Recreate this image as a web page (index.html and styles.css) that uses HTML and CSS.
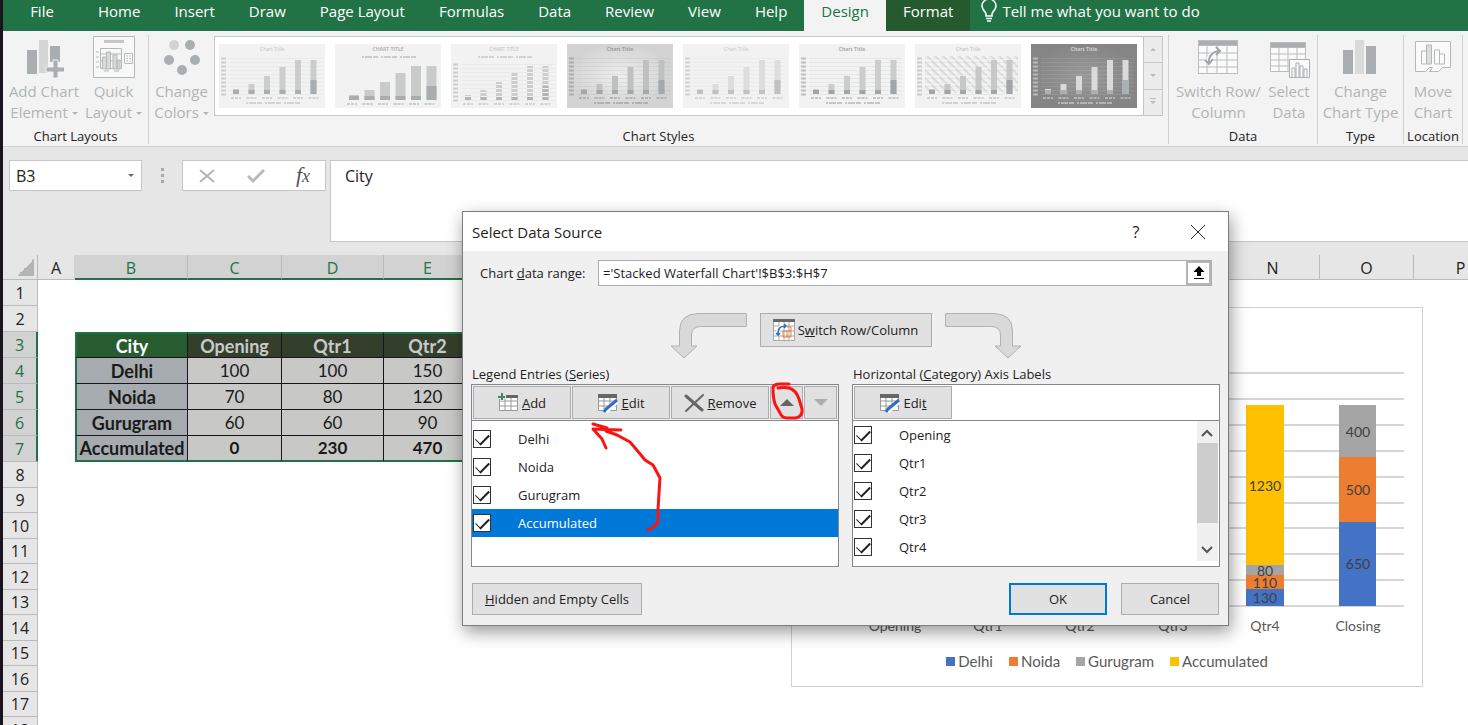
FILE: index.html
```html
<!DOCTYPE html>
<html lang="en">
<head>
  <meta charset="UTF-8">
  <meta name="viewport" content="width=device-width, initial-scale=1.0">
  <title>Stacked Waterfall Chart</title>
  <link rel="stylesheet" href="styles.css">
</head>
<body>
  <nav class="tabs">
    <button class="tab tab-file">File</button>
    <button class="tab">Home</button>
    <button class="tab">Insert</button>
    <button class="tab">Draw</button>
    <button class="tab">Page Layout</button>
    <button class="tab">Formulas</button>
    <button class="tab">Data</button>
    <button class="tab">Review</button>
    <button class="tab">View</button>
    <button class="tab">Help</button>
    <button class="tab tab-active">Design</button>
    <button class="tab tab-context">Format</button>
    <button class="tell-me">
      <svg width="18" height="24" viewBox="0 0 18 24" fill="none" stroke="#fff" stroke-width="1.6"><path d="M6 17v-2c0-2-4-4-4-8a7 7 0 0 1 14 0c0 4-4 6-4 8v2zM6 19.500h6M7 22h4"/></svg>
      Tell me what you want to do
    </button>
  </nav>

  <div class="ribbon">
    <section class="group group-layouts">
      <div class="group-items">
        <button class="tool" disabled>
          <svg width="40" height="42" viewBox="0 0 40 42"><path fill="#a9afb1" d="M3 14h10v24H3zM26 10h10v16H26z"/><path fill="#d5d6d6" d="M15 4h9v33h-9z"/><path fill="#a9afb1" stroke="#f3f3f3" d="M29 24h5v7h7v5h-7v6h-5v-6h-7v-5h7z"/></svg>
          <span>Add Chart<br>Element <i class="caret"></i></span>
        </button>
        <button class="tool" disabled>
          <svg width="44" height="42" viewBox="0 0 44 42" fill="none" stroke="#b4b8b9"><path fill="#f8f8f8" d="M1.500.5h41v41h-41z"/><path stroke-width="3" stroke="#c4c6c7" d="M12 5.500h20"/><path d="M8.500 12.500h21v20h-21zM8.500 18h21M8.500 25h21M4 16h3M4 21h3M4 26h3M4 31h3M12 35h5M22 35h5"/><path fill="#d8dada" d="M10.500 21h4v12h-4zM14.500 16h4v17h-4zM21 19h4v14h-4zM25 24h3v9h-3z"/><path fill="#fff" d="M32.500 17.500h8v10h-8z"/><path d="M34 20h2M37 20h2M34 22.500h2M37 22.500h2M34 25h2M37 25h2"/></svg>
          <span>Quick<br>Layout <i class="caret"></i></span>
        </button>
      </div>
      <div class="group-name">Chart Layouts</div>
    </section>

    <section class="group group-styles">
      <div class="group-items">
        <button class="tool tool-colors" disabled>
          <svg width="40" height="42" viewBox="0 0 40 42" fill="#a9afb1"><circle cx="12" cy="9" r="5" fill="#d2d3d3"/><circle cx="28" cy="9" r="5"/><circle cx="7" cy="24" r="5"/><circle cx="33" cy="24" r="5"/><circle cx="20" cy="34" r="5"/></svg>
          <span>Change<br>Colors <i class="caret"></i></span>
        </button>
        <div class="gallery">
          <div class="thumbs" id="thumbs"></div>
          <div class="gallery-scroll">
            <button disabled aria-label="Previous row"><i class="caret caret-up"></i></button>
            <button disabled aria-label="Next row"><i class="caret"></i></button>
            <button disabled aria-label="More styles"><i class="caret caret-more"></i></button>
          </div>
        </div>
      </div>
      <div class="group-name">Chart Styles</div>
    </section>

    <section class="group group-data">
      <div class="group-items">
        <button class="tool" disabled>
          <svg width="42" height="42" viewBox="0 0 42 42" fill="none" stroke="#b9bcbd"><path fill="#fafafa" d="M1.500 4.500h39v33h-39z"/><path fill="#a9afb1" d="M1.500 4.500h39v5h-39z"/><path d="M1 17h39M1 24h39M1 31h39M10 10v27M20 10v27M30 10v27"/><path stroke="#f8f8f8" stroke-width="5" d="M12 28c-1-7 4-13 11-12"/><path stroke="#9fa6a8" stroke-width="2" d="M12 28c-1-8 4-13 11-13M8 24l4 4 4-5M19 11l4 4-4 4"/></svg>
          <span>Switch Row/<br>Column</span>
        </button>
        <button class="tool" disabled>
          <svg width="42" height="42" viewBox="0 0 42 42" fill="none" stroke="#b9bcbd"><path fill="#fafafa" d="M2.500 6.500h35v29h-35z"/><path fill="#a9afb1" d="M2.500 6.500h35v5h-35z"/><path d="M2 18h35M2 24h35M2 30h35M11 12v24M20 12v24M29 12v24"/><path fill="#fafafa" stroke="#a9afb1" d="M21.500 23.500h20v18h-20zM24 41v-9h3v9M28 41V27h3v14M32 41V30h3v11M36 41v-8h3v8"/></svg>
          <span>Select<br>Data</span>
        </button>
      </div>
      <div class="group-name">Data</div>
    </section>

    <section class="group group-type">
      <div class="group-items">
        <button class="tool" disabled>
          <svg width="42" height="42" viewBox="0 0 42 42"><path fill="#a9afb1" d="M4 14h10v24H4zM27 10h10v28H27z"/><path fill="#d9dada" d="M16 4h9v34h-9z"/></svg>
          <span>Change<br>Chart Type</span>
        </button>
      </div>
      <div class="group-name">Type</div>
    </section>

    <section class="group group-location">
      <div class="group-items">
        <button class="tool" disabled>
          <svg width="42" height="42" viewBox="0 0 42 42" fill="none" stroke="#b4b8b9"><path fill="#fafafa" d="M3.500 5.500h35v26h-8l-4 4h-9l3-4h-3l-4 4h-10z"/><path d="M9.500 15h5v13h-5zM22.500 14h5v14h-5zM27.500 18h5v10h-5z"/><path fill="#dcdddd" d="M14.500 9h5v19h-5z"/></svg>
          <span>Move<br>Chart</span>
        </button>
      </div>
      <div class="group-name">Location</div>
    </section>
  </div>

  <div class="formula-bar">
    <div class="name-box">
      <input type="text" value="B3" aria-label="Name box">
      <button aria-label="Defined names"><i class="caret"></i></button>
    </div>
    <div class="dots"><i></i><i></i><i></i></div>
    <div class="entry-buttons">
      <button aria-label="Cancel entry"><svg width="18" height="18" viewBox="0 0 18 18" fill="none" stroke="#b5b5b5" stroke-width="2"><path d="M2 3l14 12M16 3L2 15"/></svg></button>
      <button aria-label="Enter"><svg width="18" height="18" viewBox="0 0 18 18" fill="none" stroke="#b9b9b9" stroke-width="3"><path d="M1 9l5 5L17 3"/></svg></button>
      <button class="fx" aria-label="Insert function"><span>f</span>x</button>
    </div>
    <textarea class="formula" aria-label="Formula">City</textarea>
  </div>

  <main class="sheet">
    <table class="grid" id="grid"></table>

    <div class="chart">
      <svg width="631" height="379" viewBox="0 0 631 379">
        <path class="gridlines" d="M57 65h555M57 91h555M57 117h555M57 143h555M57 169h555M57 195h555M57 220h555M57 246h555M57 272h555M57 298h555"/>
        <g class="bar">
          <path fill="#ffc000" d="M454 97h38v160h-38z"/>
          <path fill="#a5a5a5" d="M454 257h38v10h-38z"/>
          <path fill="#ed7d31" d="M454 267h38v14h-38z"/>
          <path fill="#4472c4" d="M454 281h38v17h-38z"/>
          <text x="473" y="183">1230</text>
          <text x="473" y="268">80</text>
          <text x="473" y="280">110</text>
          <text x="473" y="295">130</text>
        </g>
        <g class="bar">
          <path fill="#a5a5a5" d="M547 97h37v52h-37z"/>
          <path fill="#ed7d31" d="M547 149h37v65h-37z"/>
          <path fill="#4472c4" d="M547 214h37v84h-37z"/>
          <text x="566" y="129">400</text>
          <text x="566" y="187">500</text>
          <text x="566" y="261">650</text>
        </g>
        <g class="axis">
          <text x="103" y="323">Opening</text>
          <text x="196" y="323">Qtr1</text>
          <text x="288" y="323">Qtr2</text>
          <text x="381" y="323">Qtr3</text>
          <text x="473" y="323">Qtr4</text>
          <text x="566" y="323">Closing</text>
        </g>
      </svg>
      <ul class="legend">
        <li class="delhi">Delhi</li>
        <li class="noida">Noida</li>
        <li class="gurugram">Gurugram</li>
        <li class="accumulated">Accumulated</li>
      </ul>
    </div>
  </main>

  <div class="dialog" role="dialog" aria-labelledby="dialog-title">
    <div class="title-bar">
      <h1 id="dialog-title">Select Data Source</h1>
      <button class="help" aria-label="Help">?</button>
      <button class="close" aria-label="Close"><svg width="14" height="14" viewBox="0 0 14 14" stroke="#222"><path d="M0 0l14 14M14 0L0 14"/></svg></button>
    </div>
    <div class="dialog-body">
      <div class="range-row">
        <label for="range">Chart <u>d</u>ata range:</label>
        <div class="range-box">
          <input type="text" id="range" value="='Stacked Waterfall Chart'!$B$3:$H$7">
          <button aria-label="Collapse dialog"><svg width="14" height="14" viewBox="0 0 14 14"><path d="M7 0l5.500 6H9v4H5V6H1.500zM2 12h10v1H2z"/></svg></button>
        </div>
      </div>

      <div class="switch-row">
        <svg width="78" height="48" viewBox="0 0 78 48" fill="#d9d9d9" stroke="#aeb2b4"><path d="M76.500 1.500H28Q9.500 2 9.500 19v15H1l13 12 13-12h-5.500V23q0-8 9-8.500h46z"/></svg>
        <button class="btn switch-btn">
          <svg width="22" height="22" viewBox="0 0 22 22" fill="none" stroke="#aaa"><path fill="#fff" d="M.5.5h21v21H.5zM0 7h21M0 12h21M0 17h21M6 3v18M11 3v18M16 3v18"/><path fill="#666" stroke="#666" d="M.5.500h21v2H.5z"/><path stroke="#ed7d31" d="M10 12h8v6h-8zM14 8h4v4M14 12v6"/><path fill="none" stroke="#fff" stroke-width="4" d="M5 15c0-5 1-8 7-8"/><path stroke="#2b6fc4" stroke-width="1.500" d="M5 16c0-6 1-9 8-9M11 5l2 2-2 2M3 14l2 2 2-2"/></svg>
          <span>S<u>w</u>itch Row/Column</span>
        </button>
        <svg width="78" height="48" viewBox="0 0 78 48" fill="#d9d9d9" stroke="#aeb2b4"><path d="M1.500 1.500H50Q68.500 2 68.500 19v15H77L64 46 51 34h5.500V23q0-8-9-8.500h-46z"/></svg>
      </div>

      <div class="panels">
        <section class="panel-wrap">
          <h2>Legend Entries (<u>S</u>eries)</h2>
          <div class="panel">
            <div class="toolbar">
              <button class="btn"><svg width="21" height="20" viewBox="0 0 21 20"><path fill="#fff" stroke="#999" d="M1.500 3.500h18v14h-18zM1 8h18M1 13h18M7 4v14M13 4v14"/><path fill="#666" d="M8 2h12v3H8z"/><path stroke="#e1e1e1" stroke-width="4" d="M4 0v8M0 4h8"/><path stroke="#3a8a63" stroke-width="2" d="M4 0v7M0 4h7"/></svg><span><u>A</u>dd</span></button>
              <button class="btn"><svg width="21" height="20" viewBox="0 0 21 20"><path fill="#fff" stroke="#999" d="M1.500 3.500h18v14h-18zM1 8h18M1 13h18M7 4v14M13 4v14"/><path fill="#666" d="M1 1h19v4H1z"/><path stroke="#fff" stroke-width="5" d="M8 19L20 8"/><path stroke="#2b6fc4" stroke-width="3" d="M7 19l2-3L20 7"/></svg><span><u>E</u>dit</span></button>
              <button class="btn"><svg width="21" height="20" viewBox="0 0 21 20" fill="none" stroke="#666" stroke-linecap="round"><path stroke-width="3" d="M2 3l8 7M18 17l-8-7"/><path stroke-width="2" d="M19 2L2 18"/></svg><span><u>R</u>emove</span></button>
              <button class="btn arrow" aria-label="Move up"><i class="up"></i></button>
              <button class="btn arrow" aria-label="Move down" disabled><i class="down"></i></button>
            </div>
            <div class="list list-series">
              <label class="item"><input type="checkbox" checked>Delhi</label>
              <label class="item"><input type="checkbox" checked>Noida</label>
              <label class="item"><input type="checkbox" checked>Gurugram</label>
              <label class="item selected"><input type="checkbox" checked>Accumulated</label>
            </div>
          </div>
        </section>

        <section class="panel-wrap">
          <h2>Horizontal (<u>C</u>ategory) Axis Labels</h2>
          <div class="panel">
            <div class="toolbar">
              <button class="btn"><svg width="21" height="20" viewBox="0 0 21 20"><path fill="#fff" stroke="#999" d="M1.500 3.500h18v14h-18zM1 8h18M1 13h18M7 4v14M13 4v14"/><path fill="#666" d="M1 1h19v4H1z"/><path stroke="#fff" stroke-width="5" d="M8 19L20 8"/><path stroke="#2b6fc4" stroke-width="3" d="M7 19l2-3L20 7"/></svg><span>Edi<u>t</u></span></button>
            </div>
            <div class="list-row">
              <div class="list">
                <label class="item"><input type="checkbox" checked>Opening</label>
                <label class="item"><input type="checkbox" checked>Qtr1</label>
                <label class="item"><input type="checkbox" checked>Qtr2</label>
                <label class="item"><input type="checkbox" checked>Qtr3</label>
                <label class="item"><input type="checkbox" checked>Qtr4</label>
              </div>
              <div class="scrollbar">
                <svg width="20" height="22" viewBox="0 0 20 22" fill="none" stroke="#555" stroke-width="2"><path d="M5 15l5-5 5 5"/></svg>
                <div class="thumb"></div>
                <svg width="20" height="22" viewBox="0 0 20 22" fill="none" stroke="#555" stroke-width="2"><path d="M5 8l5 5 5-5"/></svg>
              </div>
            </div>
          </div>
        </section>
      </div>

      <div class="actions">
        <button class="btn btn-hidden"><span><u>H</u>idden and Empty Cells</span></button>
        <button class="btn btn-ok">OK</button>
        <button class="btn">Cancel</button>
      </div>
    </div>

    <svg class="ink" viewBox="0 0 765 413" width="765" height="413">
      <path d="M326 172h-9q-7 0-7 4 0 10 2 16l5 9q2 5 7 5h9q7-2 6-9l-3-10q-3-9-10-11-5-1-11 0"/>
      <path d="M185 318q7-3 10-8v-13l2-31-7-13-8-5-4-5-11-13-13-7-11-4 1-3-14-4M158 218l-28-1 9 10 4 9"/>
    </svg>
  </div>

  <script>
    const columns = [
      ['A', 37], ['B', 113], ['C', 94], ['D', 102], ['E', 88], ['F', 96], ['G', 94], ['H', 94],
      ['I', 94], ['J', 94], ['K', 94], ['L', 94], ['M', 94], ['N', 94], ['O', 94], ['P', 94]
    ];
    // cell values of the source table, by row number, from column B on
    const data = {
      3: ['City', 'Opening', 'Qtr1', 'Qtr2', 'Qtr3', 'Qtr4', 'Closing'],
      4: ['Delhi', 100, 100, 150, '', '', ''],
      5: ['Noida', 70, 80, 120, '', '', ''],
      6: ['Gurugram', 60, 60, 90, '', '', ''],
      7: ['Accumulated', 0, 230, 470, '', '', '']
    };

    function renderGrid() {
      let html = '<colgroup><col style="width:35px">';
      columns.forEach(c => html += `<col style="width:${c[1]}px">`);
      html += '</colgroup><thead><tr><th class="corner"></th>';
      columns.forEach((c, i) => {
        html += `<th class="${i >= 1 && i <= 7 ? 'picked' : ''}">${c[0]}</th>`;
      });
      html += '</tr></thead><tbody>';
      for (let row = 1; row <= 18; row++) {
        const values = data[row];
        html += `<tr class="${values ? 'data-row row-' + row : ''}"><th class="${values ? 'picked' : ''}">${row}</th>`;
        columns.forEach((c, i) => {
          const filled = values && i >= 1 && i <= 7;
          html += filled ? `<td class="cell">${values[i - 1]}</td>` : '<td></td>';
        });
        html += '</tr>';
      }
      document.getElementById('grid').innerHTML = html + '</tbody>';
    }

    const styles = [
      { bg: '#f2f2f2', bar: '#cbcccc', low: '#a8adaf', ink: '#c0c0c0', title: 'Chart Title' },
      { bg: '#f2f2f2', bar: '#c9caca', low: '#a8adaf', ink: '#b4b4b4', title: 'CHART TITLE', top: true, wide: true, bold: true },
      { bg: '#f2f2f2', bar: '#cccdcd', low: '#b0b4b5', ink: '#c0c0c0', title: 'CHART TITLE', top: true, dashed: true },
      { bg: 'url(#silver)', bar: '#bfc0c0', low: '#a3a8aa', ink: '#9b9b9b', title: 'Chart Title', bold: true },
      { bg: '#f2f2f2', bar: '#dcdddd', low: '#bfc1c2', ink: '#c6c6c6', title: 'Chart Title' },
      { bg: '#f2f2f2', bar: '#cbcccc', low: '#a0a6a8', ink: '#a9a9a9', title: 'Chart Title', bold: true },
      { bg: '#f2f2f2', bar: '#c6c7c7', low: '#a0a6a8', ink: '#bababa', title: 'Chart Title', hatch: true },
      { bg: 'url(#dark)', bar: '#dadada', low: '#a9b1b4', ink: '#d2d2d2', title: 'Chart Title', bold: true }
    ];

    function renderThumbs() {
      const heights = [5, 10, 18, 27, 34, 34];
      const defs = `<defs>
        <radialGradient id="silver"><stop offset="0" stop-color="#eee"/><stop offset="1" stop-color="#d3d3d3"/></radialGradient>
        <radialGradient id="dark"><stop offset="0" stop-color="#999"/><stop offset="1" stop-color="#858585"/></radialGradient>
        <pattern id="hatch" width="8" height="8" patternUnits="userSpaceOnUse"><path d="M-2-2l12 12" stroke="#dedede" stroke-width="2"/></pattern>
      </defs>`;
      document.getElementById('thumbs').innerHTML = styles.map((s, n) => {
        const base = s.top ? 56 : 50;
        const w = s.wide ? 10 : 6;
        let svg = `<rect width="106" height="64" fill="${s.bg}"/>`;
        if (s.hatch) svg += '<rect x="10" y="12" width="93" height="37" fill="url(#hatch)"/>';
        for (let y = base - 36; y <= base && !s.wide; y += 4) {
          svg += `<path d="M10 ${y}.500h93" stroke="${s.ink}" opacity=".15"/><path d="M2 ${y}.500h5" stroke="${s.ink}" stroke-width="2" opacity=".7"/>`;
        }
        heights.forEach((h, i) => {
          const x = 14 + i * 15.500;
          const low = i == 5 ? 14 : 4;
          svg += `<path d="M${x} ${base}v${-h}h${w}v${h}z" fill="${s.bar}"/><path d="M${x} ${base}v${-low}h${w}v${low}z" fill="${s.low}"/>`;
          if (s.dashed) svg += `<path d="M${x + 3} ${base - 3}V${base - h}" stroke="${s.bg}" stroke-width="6" stroke-dasharray="1 3"/>`;
          svg += `<path d="M${x - 2} ${base + 4}h10" stroke="${s.ink}" stroke-width="2" stroke-dasharray="3 1" opacity=".6"/>`;
        });
        svg += `<path d="M27 ${s.top ? 13 : 59}h54" stroke="${s.ink}" stroke-width="2" stroke-dasharray="2 1 7 1 5 3" opacity=".6"/>`;
        svg += `<text x="53" y="7" text-anchor="middle" font-size="5" font-weight="${s.bold ? 700 : 400}" fill="${s.ink}">${s.title}</text>`;
        return `<button disabled aria-label="Style ${n + 1}"><svg width="106" height="64" viewBox="0 0 106 64">${n ? '' : defs}${svg}</svg></button>`;
      }).join('');
    }

    renderGrid();
    renderThumbs();
  </script>
</body>
</html>
```
FILE: styles.css
```css
* {
  box-sizing: border-box;
}
body {
  margin: 0;
  height: 100vh;
  display: flex;
  flex-direction: column;
  position: relative;
  overflow: hidden;
  border-left: 3px solid #1a141d;
  background: #e6e6e6;
  color: #222;
  font-family: "Open Sans", "Noto Sans", sans-serif;
  font-size: 13px;
}
button, input, textarea {
  font: inherit;
  color: inherit;
  margin: 0;
  padding: 0;
  border: 0;
  background: none;
}
svg {
  display: block;
  flex: none;
}

/* tabs */
.tabs {
  display: flex;
  flex: none;
  height: 31px;
  background: #217346;
  color: #fff;
  font-size: 15px;
}
.tab {
  padding: 0 17px 10px;
  line-height: 20px;
  white-space: nowrap;
}
.tab-file {
  width: 78px;
}
.tab-active {
  background: #f3f3f3;
  color: #217346;
}
.tab-context {
  background: #25592e;
}
.tell-me {
  display: flex;
  align-items: center;
  gap: 4px;
  padding: 0 10px 10px;
  line-height: 20px;
  white-space: nowrap;
}

/* ribbon */
.ribbon {
  display: flex;
  flex: none;
  height: 116px;
  padding: 4px 5px 2px 0;
  background: #f3f3f3;
  border-bottom: 1px solid #d2d2d2;
}
.group {
  display: flex;
  flex-direction: column;
  justify-content: space-between;
  flex: none;
  border-right: 1px solid #d2d2d2;
}
.group-layouts {
  width: 146px;
}
.group-styles {
  flex: 1;
  min-width: 0;
}
.group-data {
  width: 149px;
}
.group-type {
  width: 86px;
}
.group-location {
  width: 59px;
}
.group-items {
  display: flex;
  justify-content: space-evenly;
}
.group-styles .group-items {
  justify-content: flex-start;
}
.group-name {
  text-align: center;
  line-height: 16px;
}
.tool {
  display: flex;
  flex-direction: column;
  align-items: center;
  gap: 3px;
  padding-top: 1px;
  color: #b1b5b6;
  font-size: 15px;
  line-height: 21px;
  white-space: nowrap;
}
.tool-colors {
  width: 65px;
}
.caret {
  display: inline-block;
  vertical-align: middle;
  border: 3px solid transparent;
  border-top-color: currentColor;
  border-bottom: 0;
}
.caret-up {
  border-top: 0;
  border-bottom: 3px solid currentColor;
}
.caret-more {
  box-shadow: 0 -2px #ececec, 0 -3px currentColor;
}
.gallery {
  display: flex;
  flex: 1;
  min-width: 0;
  height: 80px;
  margin: 1px 5px 0 0;
  border: 1px solid #c6c6c6;
  background: #fff;
}
.thumbs {
  display: flex;
  flex: 1;
  gap: 10px;
  padding: 7px 4px;
  overflow: hidden;
}
.gallery-scroll {
  display: flex;
  flex-direction: column;
  width: 19px;
  border-left: 1px solid #c6c6c6;
  background: #ececec;
  color: #bbb;
}
.gallery-scroll button {
  display: flex;
  align-items: center;
  justify-content: center;
  flex: 1;
}
.gallery-scroll button + button {
  border-top: 1px solid #c6c6c6;
}

/* formula bar */
.formula-bar {
  display: flex;
  flex: none;
  align-items: flex-start;
  padding: 13px 0 13px 6px;
  font-size: 16px;
}
.name-box {
  display: flex;
  align-items: center;
  width: 133px;
  height: 31px;
  padding: 0 7px 0 6px;
  border: 1px solid #c6c6c6;
  background: #fff;
}
.name-box input {
  flex: 1;
  min-width: 0;
}
.name-box .caret {
  display: block;
  color: #666;
}
.dots {
  display: flex;
  flex-direction: column;
  align-items: center;
  gap: 3px;
  width: 40px;
  padding-top: 8px;
}
.dots i {
  width: 3px;
  height: 3px;
  background: #a9a9a9;
}
.entry-buttons {
  display: flex;
  justify-content: space-between;
  align-items: center;
  width: 144px;
  height: 31px;
  padding: 0 15px;
  border: 1px solid #c6c6c6;
  background: #fff;
}
.fx {
  font: italic 18px/24px "Liberation Serif", serif;
  color: #555;
}
.fx span {
  font-size: 22px;
}
.formula {
  flex: 1;
  height: 82px;
  margin-left: 4px;
  padding: 3px 14px;
  border: 1px solid #c6c6c6;
  border-right: 0;
  background: #fff;
  line-height: 24px;
  resize: none;
}

/* sheet */
.sheet {
  flex: 1;
  min-height: 0;
  position: relative;
  overflow: hidden;
  background: #fff;
}
.grid {
  width: 1505px;
  table-layout: fixed;
  border-collapse: separate;
  border-spacing: 0;
  font-size: 16px;
}
.grid th, .grid td {
  height: 26px;
  padding: 0;
  overflow: hidden;
  text-align: center;
  line-height: 20px;
  white-space: nowrap;
}
.grid th {
  font-weight: 400;
  background: #e6e6e6;
  border-right: 1px solid #b9bcbd;
  border-bottom: 1px solid #b9bcbd;
}
.grid thead th {
  height: 25px;
  padding-top: 2px;
}
.grid thead th:nth-child(2) {
  border-right-color: #d2d2d2;
}
.grid tbody tr:nth-child(n+9):nth-child(odd) th,
.grid tbody tr:nth-child(n+9):nth-child(odd) td {
  height: 25px;
}
.grid .picked {
  background: #d2d2d2;
  color: #217346;
}
.grid thead .picked {
  border-bottom: 2px solid #217346;
}
.grid tbody .picked {
  border-right: 2px solid #217346;
}
.grid .corner {
  background: linear-gradient(135deg, #e6e6e6 50%, #b2b5b6 50%) 14px 4px / 17px 17px no-repeat #e6e6e6;
}
.grid .cell {
  font-family: Lato, "Open Sans", sans-serif;
  font-size: 17px;
  background: #c8c8c7;
  color: #1a1a1a;
  border-right: 1px solid #1a141d;
  border-bottom: 1px solid #1a141d;
}
.grid .cell:nth-child(3) {
  background: #a5abae;
  font-size: 18px;
  font-weight: 700;
  border-left: 2px solid #217346;
}
.row-3 .cell, .row-7 .cell {
  font-weight: 700;
}
.grid .row-3 .cell {
  background: #333f2b;
  color: #c9c9c9;
  font-size: 18px;
  border-top: 2px solid #217346;
}
.grid .row-3 .cell:nth-child(3) {
  background: #265c30;
  color: #fff;
}
.grid .row-7 .cell {
  border-bottom: 2px solid #217346;
}

/* chart */
.chart {
  position: absolute;
  left: 788px;
  top: 52px;
  width: 632px;
  height: 380px;
  border: 1px solid #d2d2d2;
  background: #fff;
  color: #595959;
  font-family: Lato, "Open Sans", sans-serif;
  font-size: 14px;
}
.chart text {
  fill: #595959;
  text-anchor: middle;
}
.chart .bar text {
  fill: #404040;
}
.gridlines {
  fill: none;
  stroke: #d6d6d6;
  stroke-width: 2;
}
.legend {
  position: absolute;
  left: 0;
  right: 0;
  bottom: 15px;
  display: flex;
  justify-content: center;
  gap: 16px;
  margin: 0;
  padding: 0;
  list-style: none;
  font-size: 15px;
  line-height: 20px;
}
.legend li {
  display: flex;
  align-items: center;
  gap: 3px;
}
.legend li::before {
  content: "";
  width: 9px;
  height: 9px;
  background: #4472c4;
}
.legend .noida::before {
  background: #ed7d31;
}
.legend .gurugram::before {
  background: #a5a5a5;
}
.legend .accumulated::before {
  background: #ffc000;
}

/* dialog */
.dialog {
  position: absolute;
  left: 459px;
  top: 211px;
  width: 767px;
  border: 1px solid #7a7d7e;
  background: #f0f0f0;
  box-shadow: 2px 6px 16px rgba(0, 0, 0, 0.4);
}
.title-bar {
  display: flex;
  align-items: center;
  height: 39px;
  padding: 0 23px 0 9px;
  background: #fff;
}
.title-bar h1 {
  flex: 1;
  margin: 0;
  font-size: 15px;
  font-weight: 400;
}
.help {
  width: 16px;
  margin-right: 47px;
  font-size: 16px;
}
.dialog-body {
  padding: 9px 8px 10px;
}
.range-row {
  display: flex;
  align-items: center;
  padding: 0 8px 0 9px;
}
.range-row label {
  width: 118px;
}
.range-box {
  display: flex;
  flex: 1;
  height: 26px;
  border: 1px solid #abadb3;
  background: #fff;
}
.range-box input {
  flex: 1;
  padding: 0 4px;
}
.range-box button {
  display: flex;
  align-items: center;
  justify-content: center;
  width: 25px;
  border: 2px solid #b4b6b8;
}
.switch-row {
  display: flex;
  justify-content: center;
  gap: 12px;
  padding-top: 26px;
}
.btn {
  display: flex;
  align-items: center;
  justify-content: center;
  gap: 3px;
  width: 98px;
  height: 32px;
  border: 1px solid #adadad;
  background: #e1e1e1;
  white-space: nowrap;
}
.switch-btn {
  width: 172px;
  height: 34px;
  margin-top: 1px;
}
.panels {
  display: flex;
  gap: 13px;
}
.panel-wrap {
  flex: 1;
  min-width: 0;
}
.panel-wrap h2 {
  margin: 0;
  padding: 4px 0 0 1px;
  font-size: 13px;
  font-weight: 400;
  line-height: 20px;
}
.panel {
  height: 183px;
  border: 1px solid #828790;
  background: #fff;
}
.toolbar {
  display: flex;
  gap: 1px;
  height: 36px;
  padding: 1px;
  border-bottom: 1px solid #828790;
}
.toolbar .btn {
  flex: none;
  height: 33px;
}
.toolbar .arrow {
  flex: 1;
  width: auto;
}
.list-series {
  padding-top: 4px;
}
.panel-wrap:first-child .toolbar {
  background: #f0f0f0;
}
.up, .down {
  border: 7px solid transparent;
  border-top: 0;
  border-bottom: 7px solid #666;
}
.down {
  border-bottom: 0;
  border-top: 7px solid #adadad;
}
.list-row {
  display: flex;
  padding-right: 1px;
}
.list {
  flex: 1;
}
.item {
  display: flex;
  align-items: center;
  gap: 27px;
  height: 28px;
  padding-left: 1px;
}
.item input {
  appearance: none;
  width: 18px;
  height: 18px;
  border: 1px solid #333;
  background: #fff;
}
.item input:checked::before {
  content: "";
  display: block;
  width: 12px;
  height: 6px;
  margin: 3px 0 0 2px;
  border-left: 1px solid #222;
  border-bottom: 2px solid #222;
  transform: rotate(-45deg);
}
.selected {
  background: #0078d7;
  color: #fff;
}
.scrollbar {
  width: 21px;
  background: #f0f0f0;
}
.thumb {
  height: 80px;
  margin-bottom: 16px;
  background: #cdcdcd;
}
.actions {
  display: flex;
  gap: 14px;
  padding: 16px 1px 0 1px;
}
.btn-hidden {
  width: 170px;
  margin-right: auto;
}
.btn-ok {
  border: 2px solid #0078d7;
}
.ink {
  position: absolute;
  left: 0;
  top: 0;
  pointer-events: none;
  fill: none;
  stroke: #fb1414;
  stroke-width: 3;
  stroke-linecap: round;
  stroke-linejoin: round;
}
```
